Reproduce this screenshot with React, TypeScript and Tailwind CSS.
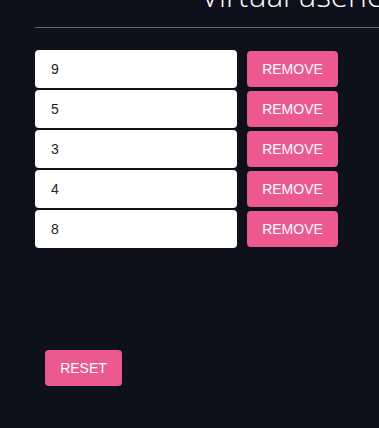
import React from "react";

const values = ["9", "5", "3", "4", "8"];

export default function App() {
  return (
    <div className="h-[428px] w-[379px] overflow-hidden bg-[#0e101c] font-['Liberation_Sans',Arial,sans-serif]">
      <h1 className="-mt-[21px] whitespace-nowrap pl-[201px] font-['Open_Sans',sans-serif] text-[31px] leading-[32px] font-light text-white">
        Virtual userlevels
      </h1>
      <hr className="ml-[35px] mt-[16px] border-0 border-b border-[#4f6294]" />

      <div className="ml-[35px] mt-[22px] flex flex-col gap-[2px]">
        {values.map((v, i) => (
          <div key={i} className="flex items-center gap-[10px]">
            <input
              readOnly
              value={v}
              className="h-[38px] w-[202px] rounded-[4px] bg-white px-[16px] text-[14px] text-[#222] outline-none"
            />
            <button className="h-[36px] w-[91px] rounded-[4px] bg-[#ec5990] text-[14px] text-white">
              REMOVE
            </button>
          </div>
        ))}
      </div>

      <button className="ml-[45px] mt-[102px] h-[36px] w-[77px] rounded-[4px] bg-[#ec5990] text-[14px] text-white">
        RESET
      </button>
    </div>
  );
}
